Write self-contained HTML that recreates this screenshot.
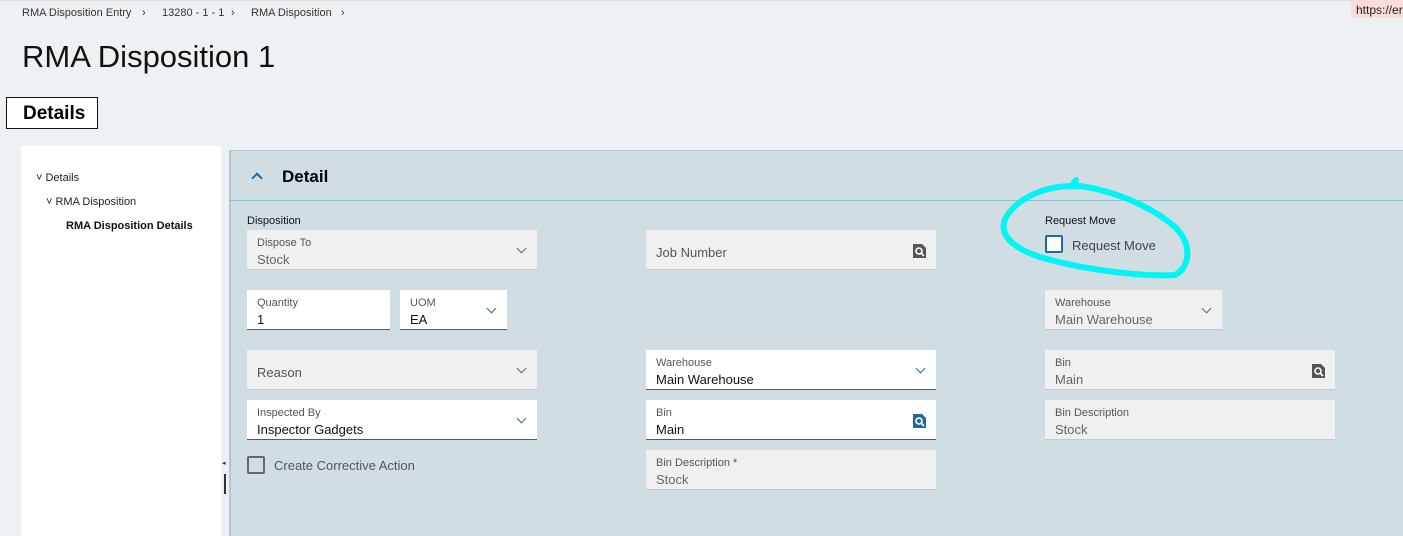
<!DOCTYPE html>
<html><head><meta charset="utf-8"><style>
*{margin:0;padding:0;box-sizing:border-box}
body{width:1403px;height:536px;overflow:hidden;background:#eef1f4;font-family:"Liberation Sans",sans-serif;position:relative;color:#000}
.a{position:absolute;white-space:nowrap}
.bc{font-size:11px;color:#333;top:7px}
.f{position:absolute;height:40px;background:#f0f0f0;border-bottom:1px solid #c8c8c8}
.f.w{background:#fff;border-bottom:1px solid #1f6aa0}
.f .l{position:absolute;left:10px;top:7px;font-size:11px;color:#555}
.f .v{position:absolute;left:10px;top:22px;font-size:13px;color:#666}
.f.w .v{color:#111}
.f .p{position:absolute;left:10px;top:15px;font-size:13px;color:#555}
.chev{position:absolute;right:12px;top:15px;width:7px;height:7px;border-right:1.5px solid #666;border-bottom:1.5px solid #666;transform:rotate(45deg)}
.f.w .chev{border-color:#1f6aa0}
.srch{position:absolute;right:10px;top:13px}
</style></head><body>
<div style="position:absolute;left:0;top:0;width:1403px;height:1px;background:#ddd"></div>
<div class="a bc" style="left:22px">RMA Disposition Entry</div>
<div class="a bc" style="left:142px">›</div>
<div class="a bc" style="left:162px">13280 - 1 - 1</div>
<div class="a bc" style="left:231px">›</div>
<div class="a bc" style="left:251px">RMA Disposition</div>
<div class="a bc" style="left:341px">›</div>
<div class="a" style="left:1351px;top:0;width:52px;height:18px;background:#fcdcd8;font-size:12px;padding:3px 0 0 5px;color:#222">https://er</div>
<div class="a" style="left:22px;top:39px;font-size:31px;color:#111">RMA Disposition 1</div>
<div class="a" style="left:6px;top:97px;width:92px;height:32px;border:1px solid #111;background:#fff;font-size:19px;font-weight:bold;padding:5px 0 0 16px">Details</div>

<div class="a" style="left:21px;top:146px;width:200px;height:390px;background:#fff"></div>
<div class="a" style="left:36px;top:172px;font-size:11px;color:#222">˅ Details</div>
<div class="a" style="left:46px;top:196px;font-size:11px;color:#222">˅ RMA Disposition</div>
<div class="a" style="left:66px;top:220px;font-size:11px;font-weight:bold;color:#111">RMA Disposition Details</div>
<div class="a" style="left:222px;top:459px;font-size:7px;color:#333">◂</div>
<div class="a" style="left:224px;top:474px;width:2px;height:20px;background:#333"></div>

<div class="a" style="left:229px;top:150px;width:1174px;height:386px;background:#d0dee3;border-left:2px solid #b8c6cc;border-top:1px solid #b8c6cc"></div>
<div class="a" style="left:229px;top:200px;width:1174px;height:1px;background:#8fbfcf"></div>
<div class="a" style="left:253px;top:174px;width:8px;height:8px;border-left:2px solid #1f6aa0;border-top:2px solid #1f6aa0;transform:rotate(45deg)"></div>
<div class="a" style="left:282px;top:167px;font-size:17px;font-weight:bold">Detail</div>

<div class="a" style="left:247px;top:215px;font-size:11px;color:#111">Disposition</div>
<div class="f" style="left:247px;top:230px;width:290px"><div class="l">Dispose To</div><div class="v">Stock</div><div class="chev"></div></div>
<div class="f" style="left:646px;top:230px;width:290px"><div class="p">Job Number</div>
<svg class="srch" width="13" height="15" viewBox="0 0 13 15"><path d="M0 1h9l4 4v10H0z" fill="#555"/><circle cx="6" cy="8" r="3" fill="none" stroke="#fff" stroke-width="1.6"/><path d="M8 10l3 3" stroke="#fff" stroke-width="1.6"/></svg></div>

<div class="f w" style="left:247px;top:290px;width:143px"><div class="l">Quantity</div><div class="v">1</div></div>
<div class="f w" style="left:400px;top:290px;width:107px"><div class="l">UOM</div><div class="v">EA</div><div class="chev"></div></div>

<div class="f" style="left:247px;top:350px;width:290px"><div class="p" style="top:15px">Reason</div><div class="chev"></div></div>
<div class="f w" style="left:646px;top:350px;width:290px"><div class="l">Warehouse</div><div class="v">Main Warehouse</div><div class="chev"></div></div>

<div class="f w" style="left:247px;top:400px;width:290px"><div class="l">Inspected By</div><div class="v">Inspector Gadgets</div><div class="chev"></div></div>
<div class="f w" style="left:646px;top:400px;width:290px"><div class="l">Bin</div><div class="v">Main</div>
<svg class="srch" width="13" height="15" viewBox="0 0 13 15"><path d="M0 1h9l4 4v10H0z" fill="#1f6aa0"/><circle cx="6" cy="8" r="3" fill="none" stroke="#fff" stroke-width="1.6"/><path d="M8 10l3 3" stroke="#fff" stroke-width="1.6"/></svg></div>

<div class="a" style="left:247px;top:456px;width:18px;height:18px;border:2px solid #666;border-radius:2px"></div>
<div class="a" style="left:274px;top:458px;font-size:13px;color:#555">Create Corrective Action</div>
<div class="f" style="left:646px;top:450px;width:290px"><div class="l">Bin Description *</div><div class="v">Stock</div></div>

<div class="a" style="left:1045px;top:215px;font-size:11px;color:#111">Request Move</div>
<div class="a" style="left:1045px;top:235px;width:18px;height:18px;border:2px solid #1f6aa0;background:#fff;border-radius:2px"></div>
<div class="a" style="left:1072px;top:238px;font-size:13px;color:#444">Request Move</div>
<div class="f" style="left:1045px;top:290px;width:177px"><div class="l">Warehouse</div><div class="v">Main Warehouse</div><div class="chev"></div></div>
<div class="f" style="left:1045px;top:350px;width:290px"><div class="l">Bin</div><div class="v">Main</div>
<svg class="srch" width="13" height="15" viewBox="0 0 13 15"><path d="M0 1h9l4 4v10H0z" fill="#555"/><circle cx="6" cy="8" r="3" fill="none" stroke="#fff" stroke-width="1.6"/><path d="M8 10l3 3" stroke="#fff" stroke-width="1.6"/></svg></div>
<div class="f" style="left:1045px;top:400px;width:290px"><div class="l">Bin Description</div><div class="v">Stock</div></div>

<svg class="a" style="left:990px;top:175px" width="210" height="110" viewBox="0 0 210 110">
<path d="M88 11 C60 10 30 20 16 42 C8 58 20 72 50 82 C90 94 150 102 185 100 C200 92 203 70 185 52 C160 30 120 14 82 10 L86 5" fill="none" stroke="#00f5f5" stroke-width="6" stroke-linecap="round" stroke-linejoin="round"/>
</svg>
</body></html>
